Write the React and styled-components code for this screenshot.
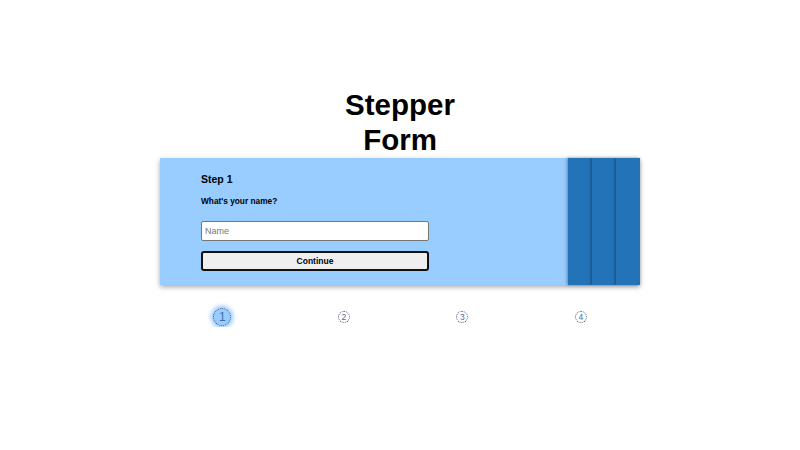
import React, { useState } from "react";
import styled, { createGlobalStyle, css } from "styled-components";

const GlobalStyle = createGlobalStyle`
  body {
    margin: 0;
    background: #fff;
    font-family: "Liberation Sans", Arial, sans-serif;
  }
`;

const Page = styled.div`
  display: flex;
  flex-direction: column;
  align-items: center;
  padding-top: 87px;
`;

const Title = styled.h1`
  margin: 0 0 1px;
  width: 140px;
  text-align: center;
  font-size: 29.5px;
  line-height: 35px;
  font-weight: 700;
  color: #000;
`;

const Card = styled.div`
  display: flex;
  width: 480px;
  height: 127px;
  background: #99ccff;
  box-shadow: 0 2px 5px rgba(0, 0, 0, 0.35);
`;

const StepBody = styled.form`
  flex: 1;
  display: flex;
  flex-direction: column;
  padding: 15px 0 0 41px;
`;

const StepTitle = styled.h2`
  margin: 0;
  font-size: 10.5px;
  line-height: 13px;
  font-weight: 700;
  color: #000;
`;

const Question = styled.label`
  margin-top: 10px;
  font-size: 8.3px;
  line-height: 11px;
  font-weight: 700;
  color: #000;
`;

const NameInput = styled.input`
  margin-top: 14px;
  box-sizing: border-box;
  width: 228px;
  height: 20px;
  padding: 0 3px;
  border: 1px solid #767676;
  border-radius: 2px;
  background: #fff;
  font-family: inherit;
  font-size: 9px;
  &::placeholder {
    color: #777;
  }
`;

const ContinueButton = styled.button`
  margin-top: 10px;
  box-sizing: border-box;
  width: 228px;
  height: 20px;
  border: 2px solid #111;
  border-radius: 3px;
  background: #efefef;
  font-family: inherit;
  font-size: 8.5px;
  font-weight: 700;
  color: #000;
  cursor: pointer;
`;

const Strips = styled.div`
  display: flex;
`;

const Strip = styled.div`
  width: 24px;
  height: 100%;
  background: #2373b9;
  box-shadow: -1px 0 3px rgba(0, 0, 0, 0.35);
`;

const Stepper = styled.div`
  display: flex;
  justify-content: space-around;
  align-items: center;
  width: 480px;
  height: 20px;
  margin-top: 22px;
`;

const Dot = styled.button`
  display: flex;
  justify-content: center;
  align-items: center;
  box-sizing: border-box;
  padding: 0;
  border-radius: 50%;
  border: 1px dotted #4a5a70;
  background: transparent;
  color: #3f6fa8;
  font-family: inherit;
  cursor: pointer;
  width: 12px;
  height: 12px;
  font-size: 8.5px;
  line-height: 1;
  ${(p) =>
    p.$active &&
    css`
      width: 18px;
      height: 18px;
      font-size: 12px;
      background: #99ccff;
      box-shadow: 0 0 4px 2px rgba(120, 185, 250, 0.8);
    `}
`;

const steps = [1, 2, 3, 4];

export default function App() {
  const [current, setCurrent] = useState(1);

  return (
    <>
      <GlobalStyle />
      <Page>
        <Title>Stepper Form</Title>
        <Card>
          <StepBody onSubmit={(e) => e.preventDefault()}>
            <StepTitle>Step {current}</StepTitle>
            <Question htmlFor="name">What's your name?</Question>
            <NameInput id="name" placeholder="Name" />
            <ContinueButton type="submit">Continue</ContinueButton>
          </StepBody>
          <Strips>
            <Strip />
            <Strip />
            <Strip />
          </Strips>
        </Card>
        <Stepper>
          {steps.map((n) => (
            <Dot key={n} $active={n === current} onClick={() => setCurrent(n)}>
              {n}
            </Dot>
          ))}
        </Stepper>
      </Page>
    </>
  );
}
